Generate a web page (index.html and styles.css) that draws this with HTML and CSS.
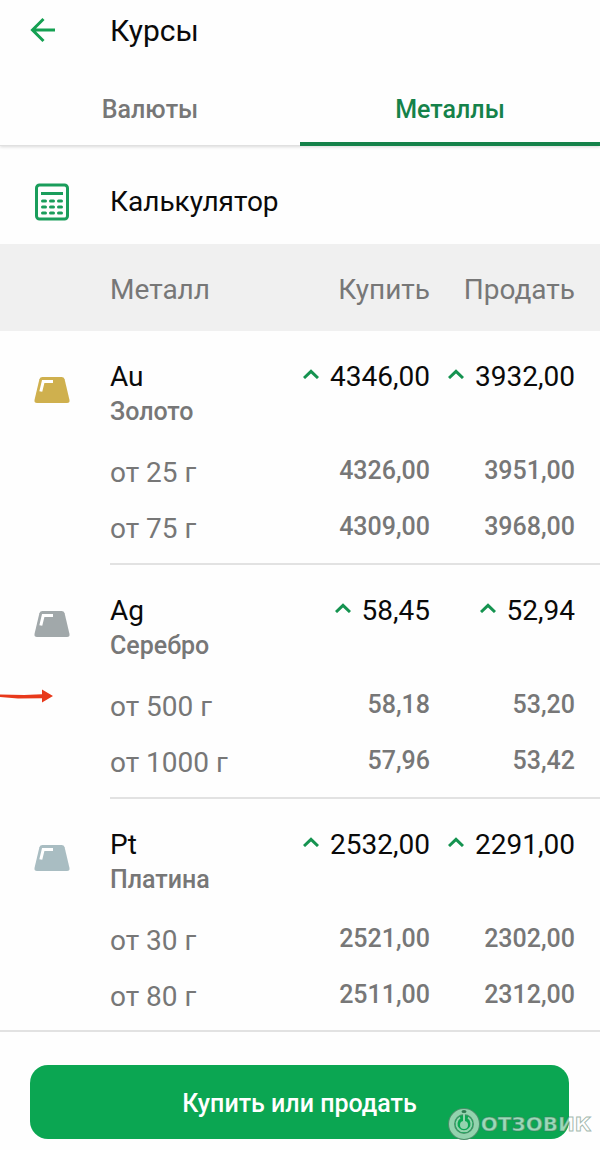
FILE: index.html
```
<!DOCTYPE html>
<html lang="ru">
<head>
  <meta charset="UTF-8" />
  <meta name="viewport" content="width=device-width, initial-scale=1.0"/>
  <title>Курсы</title>
  <link rel="stylesheet" href="styles.css">
</head>
<body>

  <!-- shared shapes -->
  <svg class="sprite" aria-hidden="true">
    <symbol id="ingot" viewBox="0 0 36 28">
      <path fill="currentColor" d="M8.500 1H27.500Q30 1 30.600 3.200L35.500 24Q36 27 33 27H3Q0 27 .5 24L5.400 3.200Q6 1 8.500 1Z"/>
      <path fill="none" stroke="#fff" stroke-width="3" d="M6.800 15.500L9.200 5.600H19"/>
    </symbol>
    <symbol id="up" viewBox="0 0 16 10">
      <path fill="none" stroke="#159350" stroke-width="3" d="M1 9L8 2.300L15 9"/>
    </symbol>
  </svg>

  <header class="top">
    <div class="title-bar">
      <a class="back" href="#" aria-label="Назад">
        <svg width="26" height="26" viewBox="0 0 26 26" fill="none" stroke="#15a052" stroke-width="3">
          <path d="M25 13H3M13.500 2L2.500 13L13.500 24"/>
        </svg>
      </a>
      <h1>Курсы</h1>
    </div>
    <nav class="tabs">
      <a class="tab" href="#">Валюты</a>
      <a class="tab active" href="#" aria-current="page">Металлы</a>
    </nav>
  </header>

  <main>
    <a class="calculator" href="#">
      <svg width="34" height="38" viewBox="0 0 34 38" fill="none" stroke="#1a9d5b" stroke-width="3">
        <rect x="1.500" y="2" width="31" height="34" rx="3"/>
        <path d="M6 10.500H28"/>
        <path stroke-linecap="round" d="M7.500 18H10.500M15.500 18H18.500M23.500 18H26.500M7.500 24H10.500M15.500 24H18.500M23.500 24H26.500M7.500 30H10.500M15.500 30H18.500M23.500 30H26.500"/>
      </svg>
      <span>Калькулятор</span>
    </a>

    <table class="rates">
      <colgroup>
        <col class="col-icon">
        <col>
        <col class="col-buy">
        <col class="col-sell">
      </colgroup>
      <thead>
        <tr>
          <td></td>
          <th scope="col">Металл</th>
          <th scope="col" class="num">Купить</th>
          <th scope="col" class="num">Продать</th>
        </tr>
      </thead>
      <tbody>
        <tr class="metal">
          <td class="icon gold" rowspan="3"><svg class="ingot"><use href="#ingot"/></svg></td>
          <th scope="row">Au<span class="name">Золото</span></th>
          <td class="num"><svg class="up"><use href="#up"/></svg>4346,00</td>
          <td class="num"><svg class="up"><use href="#up"/></svg>3932,00</td>
        </tr>
        <tr class="tier">
          <th scope="row">от 25 г</th>
          <td class="num">4326,00</td>
          <td class="num">3951,00</td>
        </tr>
        <tr class="tier last">
          <th scope="row">от 75 г</th>
          <td class="num">4309,00</td>
          <td class="num">3968,00</td>
        </tr>
      </tbody>
      <tbody>
        <tr class="metal">
          <td class="icon silver" rowspan="3">
            <svg class="ingot"><use href="#ingot"/></svg>
            <svg class="pointer" viewBox="0 0 54 14" fill="#e8391b"><path d="M0 5.500L24 6L42 5.200V.5L53 7L42 13.500V9.200L18 9.500L0 8Z"/></svg>
          </td>
          <th scope="row">Ag<span class="name">Серебро</span></th>
          <td class="num"><svg class="up"><use href="#up"/></svg>58,45</td>
          <td class="num"><svg class="up"><use href="#up"/></svg>52,94</td>
        </tr>
        <tr class="tier">
          <th scope="row">от 500 г</th>
          <td class="num">58,18</td>
          <td class="num">53,20</td>
        </tr>
        <tr class="tier last">
          <th scope="row">от 1000 г</th>
          <td class="num">57,96</td>
          <td class="num">53,42</td>
        </tr>
      </tbody>
      <tbody>
        <tr class="metal">
          <td class="icon platinum" rowspan="3"><svg class="ingot"><use href="#ingot"/></svg></td>
          <th scope="row">Pt<span class="name">Платина</span></th>
          <td class="num"><svg class="up"><use href="#up"/></svg>2532,00</td>
          <td class="num"><svg class="up"><use href="#up"/></svg>2291,00</td>
        </tr>
        <tr class="tier">
          <th scope="row">от 30 г</th>
          <td class="num">2521,00</td>
          <td class="num">2302,00</td>
        </tr>
        <tr class="tier">
          <th scope="row">от 80 г</th>
          <td class="num">2511,00</td>
          <td class="num">2312,00</td>
        </tr>
      </tbody>
    </table>
  </main>

  <footer class="bottom">
    <button class="trade" type="button">Купить или продать</button>
    <div class="watermark">
      <svg width="32" height="32" viewBox="0 0 32 32" fill="none">
        <circle cx="16" cy="16" r="12.500" stroke="#4c8f6b" stroke-width="7"/>
        <circle cx="16" cy="16" r="12.500" stroke="#93d3ae" stroke-width="5"/>
        <path stroke="#93d3ae" stroke-width="2" d="M12 9.500A7.500 7.500 0 1 0 20 9.500M16 5V15"/>
        <circle cx="16" cy="17" r="4" fill="#93d3ae"/>
        <ellipse cx="16" cy="3.500" rx="2.500" ry="1.500" fill="#2f7a51"/>
      </svg>
      <span>ОТЗОВИК</span>
    </div>
  </footer>

</body>
</html>
```
FILE: styles.css
```
* {
box-sizing: border-box;
}

body {
margin: 0;
background: #fefefe;
color: #0a0a0a;
font-family: Roboto, "Liberation Sans", sans-serif;
font-size: 28px;
line-height: 36px;
}

a {
color: inherit;
text-decoration: none;
}

svg {
display: block;
flex: none;
}

.sprite {
position: absolute;
width: 0;
height: 0;
}

/* Header and tabs */
.top {
border-bottom: 1px solid #e0e0e0;
box-shadow: 0 1px 3px rgba(0, 0, 0, 0.15);
}

.title-bar {
display: flex;
align-items: center;
height: 62px;
padding-left: 30px;
}

.back {
width: 80px;
padding-bottom: 3px;
}

h1 {
margin: 0;
font-size: 30px;
font-weight: 400;
}

.tabs {
display: flex;
height: 84px;
margin-bottom: -1px;
}

.tab {
flex: 1;
padding-top: 30px;
color: #777;
font-size: 25px;
font-weight: 500;
text-align: center;
}

.tab.active {
color: #15824a;
border-bottom: 4px solid #15824a;
}

.calculator {
display: flex;
align-items: center;
gap: 41px;
height: 98px;
padding: 14px 35px 0;
}

/* Rates table */
.rates {
width: 100%;
table-layout: fixed;
border-collapse: separate;
border-spacing: 0;
}

.col-icon {
width: 110px;
}

.col-buy {
width: 150px;
}

.col-sell {
width: 170px;
}

.rates th,
.rates td {
padding: 0;
font-weight: 400;
text-align: left;
vertical-align: top;
white-space: nowrap;
}

.rates .num {
text-align: right;
}

.rates .num:last-child {
padding-right: 25px;
}

.rates thead td,
.rates thead th {
height: 87px;
padding-top: 4px;
background: #f0f0f0;
color: #777;
vertical-align: middle;
}

.rates .metal th,
.rates .metal td {
height: 114px;
padding-top: 28px;
}

.name {
display: block;
color: #777;
font-size: 25px;
font-weight: 500;
line-height: 34px;
}

.rates .tier th {
height: 56px;
color: #777;
line-height: 56px;
}

.rates .tier td {
color: #777;
font-size: 25px;
font-weight: 500;
line-height: 52px;
}

.rates .last th,
.rates .last td {
height: 64px;
border-bottom: 2px solid #e2e2e2;
}

.rates .metal .icon {
position: relative;
padding: 45px 0 0 34px;
}

.ingot {
width: 36px;
height: 28px;
}

.gold {
color: #cfb04e;
}

.silver {
color: #a1a8aa;
}

.platinum {
color: #a9bdc2;
}

.up {
display: inline-block;
width: 16px;
height: 10px;
margin: 0 11px 10px 0;
vertical-align: middle;
}

.pointer {
position: absolute;
top: 124px;
left: 0;
width: 54px;
height: 14px;
}

/* Bottom action */
.bottom {
position: relative;
margin-top: 5px;
padding: 33px 31px 11px 30px;
border-top: 2px solid #e2e2e2;
}

.trade {
display: block;
width: 100%;
height: 74px;
padding-top: 3px;
border: 0;
border-radius: 18px;
background: #0ba652;
color: #fff;
font-family: inherit;
font-size: 25px;
font-weight: 500;
}

.watermark {
position: absolute;
right: 9px;
bottom: 10px;
display: flex;
align-items: center;
gap: 1px;
color: rgba(255, 255, 255, 0.6);
font-family: "DejaVu Sans", sans-serif;
font-size: 20px;
font-weight: 700;
line-height: 32px;
-webkit-text-stroke: 1px rgba(70, 115, 92, 0.5);
}
```
